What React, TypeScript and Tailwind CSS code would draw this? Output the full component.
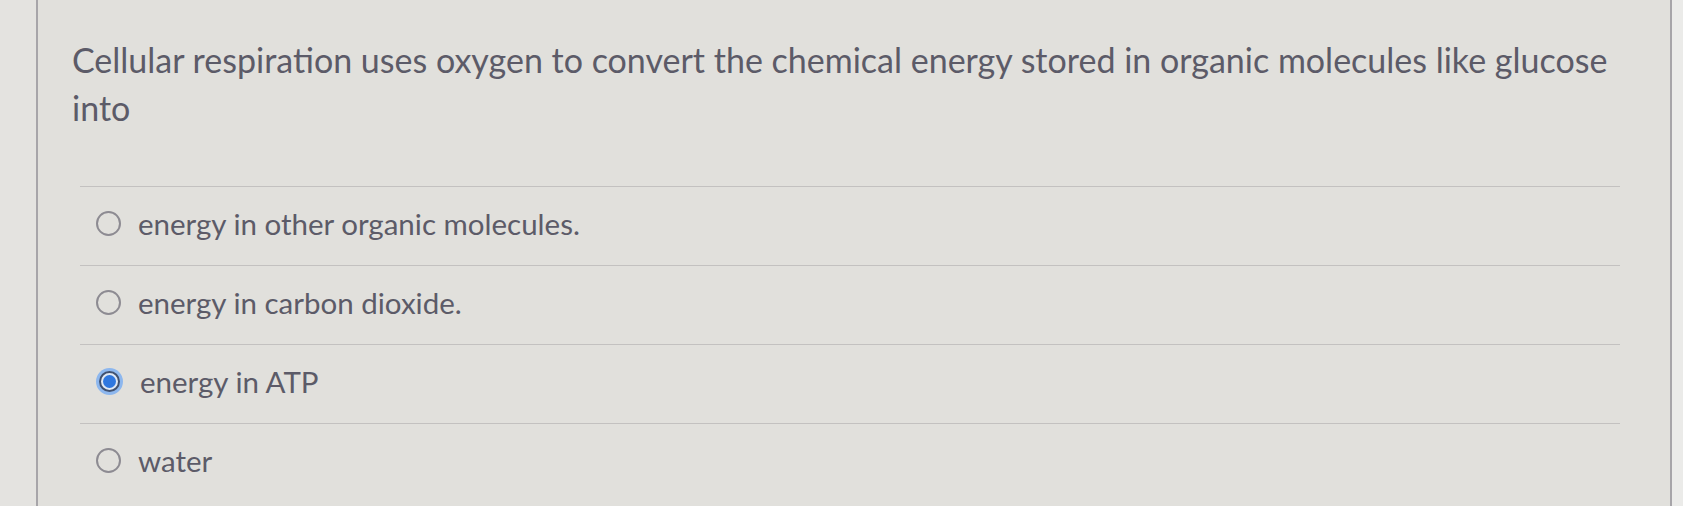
import React, { useState } from 'react';

const options = [
  'energy in other organic molecules.',
  'energy in carbon dioxide.',
  'energy in ATP',
  'water',
];

const Radio: React.FC<{ checked: boolean }> = ({ checked }) => {
  if (checked) {
    return (
      <div className="w-[27px] h-[27px] rounded-full bg-[#8db7ee] p-[3px] shrink-0">
        <div className="w-full h-full rounded-full border-[2px] border-[#41516f] bg-[#dfe8f4] flex items-center justify-center">
          <div className="w-[13px] h-[13px] rounded-full bg-[#2f77df]"></div>
        </div>
      </div>
    );
  }
  return <div className="w-[25px] h-[25px] rounded-full border-[2px] border-[#8d8b92] shrink-0"></div>;
};

export default function App() {
  const [selected, setSelected] = useState(2);

  return (
    <div className="w-full h-[506px] overflow-hidden flex bg-[#e1e0dc] font-['Lato','Open_Sans',sans-serif] text-[#5c5b68]">
      {/* left gutter */}
      <div className="w-[36px] shrink-0 bg-[#e4e3e0]"></div>

      {/* question panel */}
      <div className="w-[1636px] shrink-0 border-l-2 border-r-2 border-[#a7a5a9] pl-[34px] pr-[50px] pt-[36px]">
        <p className="text-[34px] leading-[48px] max-w-[1560px]">
          Cellular respiration uses oxygen to convert the chemical energy stored in organic molecules like glucose into
        </p>

        <div className="mt-[54px] ml-[8px] w-[1540px]">
          {options.map((label, i) => (
            <div
              key={label}
              onClick={() => setSelected(i)}
              className="h-[79px] border-t-[1.5px] border-[#c3c1c0] flex items-center gap-[17px] pl-[16px] pb-[5px] cursor-pointer"
            >
              <Radio checked={selected === i} />
              <span className="text-[29.5px] leading-[36px]">{label}</span>
            </div>
          ))}
        </div>
      </div>

      {/* right gutter */}
      <div className="flex-1 bg-[#ebebe9]"></div>
    </div>
  );
}
